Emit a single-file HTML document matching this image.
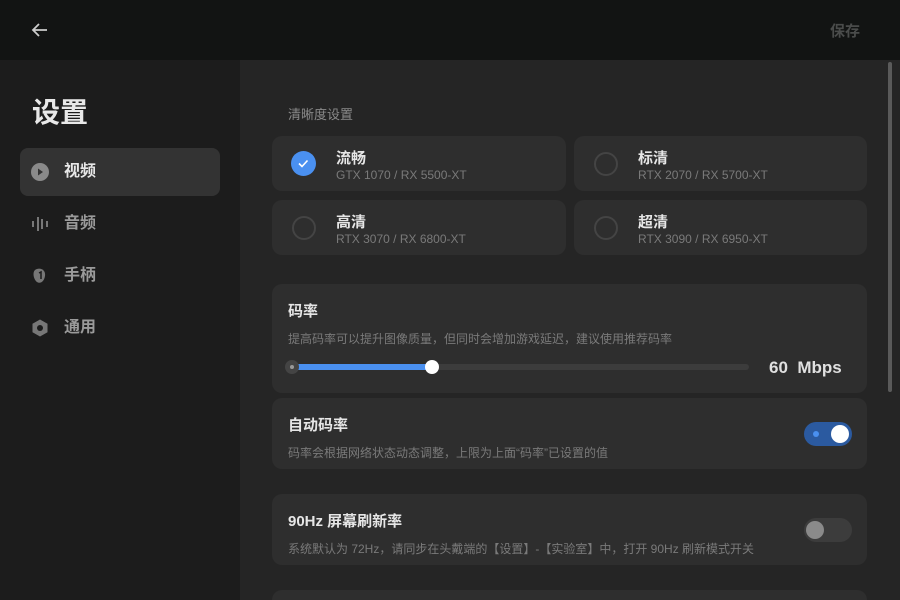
<!DOCTYPE html>
<html><head><meta charset="utf-8"><style>
*{margin:0;padding:0;box-sizing:border-box}
html{width:900px;height:600px;overflow:hidden}
body{width:900px;height:600px;overflow:hidden;background:#252525;font-family:"Liberation Sans","Noto Sans CJK SC",sans-serif;position:relative;color:#e8e8e8}
.top{position:absolute;left:0;top:0;width:900px;height:60px;background:#121413}
.side{position:absolute;left:0;top:60px;width:240px;height:540px;background:#1c1c1c}
.abs{position:absolute}
.card{position:absolute;background:#2e2e2e;border-radius:10px}
.t{font-size:15px;font-weight:bold;color:#e6e6e6}
.s{font-size:12px;color:#7a7a7a}
.radio{position:absolute;width:24px;height:24px;border-radius:50%;border:2px solid #444}
.nav{position:absolute;left:64px;font-size:16px;font-weight:bold;color:#9a9a9a;line-height:20px}
</style></head><body>
<div class="top"></div>
<svg class="abs" style="left:30px;top:20px" width="20" height="20" viewBox="0 0 20 20"><path d="M17 10H3M9 4L3 10L9 16" stroke="#ccc" stroke-width="1.8" fill="none"/></svg>
<div class="abs" style="left:830px;top:20px;font-size:15px;font-weight:bold;color:#4a4c4b">保存</div>
<div class="side"></div>
<div class="abs" style="left:32px;top:94px;font-size:28px;font-weight:bold;color:#e8e8e8;line-height:38px">设置</div>
<div class="abs" style="left:20px;top:148px;width:200px;height:48px;background:#333;border-radius:8px"></div>
<svg class="abs" style="left:31px;top:163px" width="18" height="18" viewBox="0 0 18 18"><circle cx="9" cy="9" r="9" fill="#8a8a8a"/><path d="M7 5.5L12 9L7 12.5Z" fill="#333"/></svg>
<div class="nav" style="top:162px;color:#e8e8e8">视频</div>
<svg class="abs" style="left:31px;top:215px" width="18" height="18" viewBox="0 0 18 18"><g stroke="#777" stroke-width="2"><path d="M2 6v6M7 2v14M11 4v10M16 6v6"/></g></svg>
<div class="nav" style="top:214px">音频</div>
<svg class="abs" style="left:31px;top:267px" width="18" height="18" viewBox="0 0 18 18"><path d="M4 3C8 0 15 2 14 9C13 15 9 17 6 15C3 13 1 6 4 3Z" fill="#777"/><path d="M8 6L10 5L10 12" stroke="#1c1c1c" stroke-width="1.5" fill="none"/></svg>
<div class="nav" style="top:266px">手柄</div>
<svg class="abs" style="left:31px;top:319px" width="18" height="18" viewBox="0 0 18 18"><path d="M9 0.5L16.5 4.8V13.2L9 17.5L1.5 13.2V4.8Z" fill="#777"/><circle cx="9" cy="9" r="3" fill="#1c1c1c"/></svg>
<div class="nav" style="top:318px">通用</div>

<div class="abs" style="left:288px;top:104px;font-size:13px;color:#8a8a8a">清晰度设置</div>
<div class="card" style="left:272px;top:136px;width:294px;height:55px"></div>
<div class="card" style="left:574px;top:136px;width:293px;height:55px"></div>
<div class="card" style="left:272px;top:200px;width:294px;height:55px"></div>
<div class="card" style="left:574px;top:200px;width:293px;height:55px"></div>
<svg class="abs" style="left:291px;top:151px" width="25" height="25" viewBox="0 0 25 25"><circle cx="12.5" cy="12.5" r="12.5" fill="#4a90f0"/><path d="M8 12.5L11 15.5L16.5 9.5" stroke="#fff" stroke-width="1.6" fill="none"/></svg>
<div class="radio" style="left:594px;top:152px"></div>
<div class="radio" style="left:292px;top:216px"></div>
<div class="radio" style="left:594px;top:216px"></div>
<div class="abs t" style="left:336px;top:147px">流畅</div><div class="abs s" style="left:336px;top:168px">GTX 1070 / RX 5500-XT</div>
<div class="abs t" style="left:638px;top:147px">标清</div><div class="abs s" style="left:638px;top:168px">RTX 2070 / RX 5700-XT</div>
<div class="abs t" style="left:336px;top:211px">高清</div><div class="abs s" style="left:336px;top:232px">RTX 3070 / RX 6800-XT</div>
<div class="abs t" style="left:638px;top:211px">超清</div><div class="abs s" style="left:638px;top:232px">RTX 3090 / RX 6950-XT</div>

<div class="card" style="left:272px;top:284px;width:595px;height:109px"></div>
<div class="abs t" style="left:288px;top:300px">码率</div>
<div class="abs s" style="left:288px;top:330px">提高码率可以提升图像质量，但同时会增加游戏延迟，建议使用推荐码率</div>
<div class="abs" style="left:290px;top:364px;width:459px;height:6px;border-radius:3px;background:#3c3c3c"></div>
<div class="abs" style="left:290px;top:364px;width:142px;height:6px;border-radius:3px;background:#4a90f0"></div>
<div class="abs" style="left:285px;top:360px;width:14px;height:14px;border-radius:50%;background:#444"></div>
<div class="abs" style="left:290px;top:365px;width:4px;height:4px;border-radius:50%;background:#999"></div>
<div class="abs" style="left:425px;top:360px;width:14px;height:14px;border-radius:50%;background:#fff"></div>
<div class="abs" style="left:769px;top:358px;font-size:17px;font-weight:bold;color:#e0e0e0">60&nbsp;&nbsp;Mbps</div>

<div class="card" style="left:272px;top:398px;width:595px;height:71px"></div>
<div class="abs t" style="left:288px;top:414px">自动码率</div>
<div class="abs s" style="left:288px;top:444px">码率会根据网络状态动态调整，上限为上面“码率”已设置的值</div>
<div class="abs" style="left:804px;top:422px;width:48px;height:24px;border-radius:12px;background:#2b5aa0"></div>
<div class="abs" style="left:813px;top:431px;width:6px;height:6px;border-radius:50%;background:#4a90f0"></div>
<div class="abs" style="left:831px;top:425px;width:18px;height:18px;border-radius:50%;background:#fff"></div>

<div class="card" style="left:272px;top:494px;width:595px;height:71px"></div>
<div class="abs t" style="left:288px;top:510px">90Hz 屏幕刷新率</div>
<div class="abs s" style="left:288px;top:540px">系统默认为 72Hz，请同步在头戴端的【设置】-【实验室】中，打开 90Hz 刷新模式开关</div>
<div class="abs" style="left:804px;top:518px;width:48px;height:24px;border-radius:12px;background:#3c3c3c"></div>
<div class="abs" style="left:806px;top:521px;width:18px;height:18px;border-radius:50%;background:#8a8a8a"></div>

<div class="card" style="left:272px;top:590px;width:595px;height:10px;border-radius:10px 10px 0 0"></div>
<div class="abs" style="left:888px;top:62px;width:4px;height:330px;border-radius:2px;background:#5a5a5a"></div>
</body></html>
